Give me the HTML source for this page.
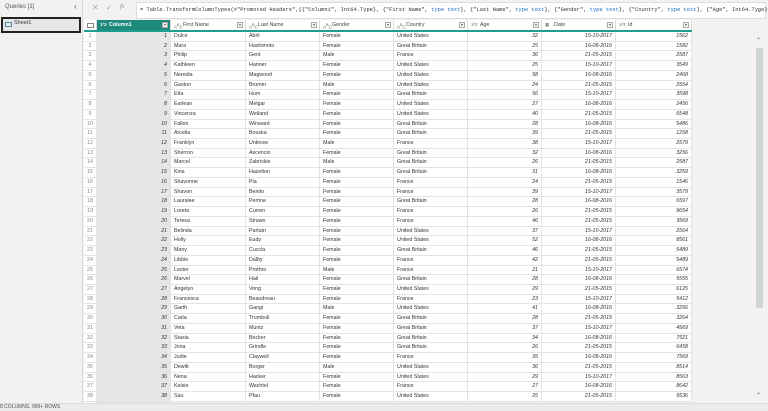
<!DOCTYPE html>
<html><head><meta charset="utf-8"><style>
*{margin:0;padding:0;box-sizing:border-box}
body{width:768px;height:411px;overflow:hidden;background:#f3f2f1;font-family:"Liberation Sans",sans-serif;position:relative;color:#333}
.a{position:absolute;white-space:nowrap}
.c{position:absolute;height:9.73px;font-size:5.3px;line-height:9.2px;padding:0 3px;border-bottom:1px solid #e4e4e4;border-right:1px solid #e4e4e4;background:#fff;overflow:hidden;white-space:nowrap}
.r{text-align:right;font-style:italic}
.h{position:absolute;top:20px;height:11px;font-size:5.3px;line-height:10px;background:#fff;border-right:1px solid #ddd;padding-left:12px;color:#444}
.h i{position:absolute;left:3px;top:0;font-style:normal;font-size:4.5px;color:#666}
.h b{position:absolute;right:2px;top:2px;width:6px;height:6px;border:1px solid #aaa;background:#f6f6f6;font-size:4px;line-height:4px;text-align:center;font-weight:normal;color:#555}
</style></head><body>
<div class="a" style="left:5px;top:4px;font-size:6px;color:#555">Queries [1]</div>
<div class="a" style="left:74px;top:2px;font-size:8px;color:#555">‹</div>
<div class="a" style="left:1px;top:17px;width:80px;height:16px;border:2px solid #222;background:#e6e6e6"></div>
<div class="a" style="left:5px;top:22px;width:7px;height:5px;border:1px solid #5a8aa0"></div>
<div class="a" style="left:14px;top:20px;font-size:5.5px;color:#333">Sheet1</div>
<div class="a" style="left:82px;top:0;width:1px;height:403px;background:#d8d8d8"></div>
<div class="a" style="left:92px;top:3px;font-size:8px;color:#aaa">✕</div>
<div class="a" style="left:106px;top:3px;font-size:8px;color:#aaa">✓</div>
<div class="a" style="left:120px;top:4px;font-size:6px;font-style:italic;color:#888;font-family:'Liberation Serif',serif">fx</div>
<div class="a" style="left:136px;top:2px;width:630px;height:17px;background:#fff;border:1px solid #ddd"></div>
<div class="a" style="left:140px;top:7px;font-size:5.4px;font-family:'Liberation Mono',monospace;color:#333">= Table.TransformColumnTypes(#"Promoted Headers",{{"Column1", Int64.Type}, {"First Name", <span style="color:#1a6ac4">type text</span>}, {"Last Name", <span style="color:#1a6ac4">type text</span>}, {"Gender", <span style="color:#1a6ac4">type text</span>}, {"Country", <span style="color:#1a6ac4">type text</span>}, {"Age", Int64.Type},</div>
<div class="a" style="left:757px;top:7px;font-size:6px;color:#555">⌄</div>
<div class="a" style="left:84px;top:20px;width:13px;height:11px;background:#fff;border-right:1px solid #ddd"></div>
<div class="a" style="left:87px;top:23px;width:7px;height:5px;border:1px solid #888"></div>
<div id="g"></div>
<div class="a" style="left:84px;top:30px;width:608px;height:2px;background:#1f9e8e"></div>
<div class="a" style="left:756px;top:48px;width:7px;height:260px;background:#cfd4d6"></div>
<div class="a" style="left:756px;top:37px;font-size:6px;color:#555">⌃</div>
<div class="a" style="left:756px;top:389px;font-size:6px;color:#555">⌄</div>
<div class="a" style="left:0;top:403px;width:768px;height:8px;background:#ecebea;border-top:1px solid #ddd"></div>
<div class="a" style="left:0;top:404px;font-size:5px;color:#555">8 COLUMNS, 999+ ROWS</div>
<script>
var d=`Dulce Abril Female US 32 15-10-2017 1562
Mara Hashimoto Female GB 25 16-08-2016 1582
Philip Gent Male France 36 21-05-2015 2587
Kathleen Hanner Female US 25 15-10-2017 3549
Nereida Magwood Female US 58 16-08-2016 2468
Gaston Brumm Male US 24 21-05-2015 2554
Etta Hurn Female GB 56 15-10-2017 3598
Earlean Melgar Female US 27 16-08-2016 2456
Vincenza Weiland Female US 40 21-05-2015 6548
Fallon Winward Female GB 28 16-08-2016 5486
Arcelia Bouska Female GB 39 21-05-2015 1258
Franklyn Unknow Male France 38 15-10-2017 2579
Sherron Ascencio Female GB 32 16-08-2016 3256
Marcel Zabriskie Male GB 26 21-05-2015 2587
Kina Hazelton Female GB 31 16-08-2016 3259
Shavonne Pia Female France 24 21-05-2015 1546
Shavon Benito Female France 39 15-10-2017 3579
Lauralee Perrine Female GB 28 16-08-2016 6597
Loreta Curren Female France 26 21-05-2015 9654
Teresa Strawn Female France 46 21-05-2015 3569
Belinda Partain Female US 37 15-10-2017 2564
Holly Eudy Female US 52 16-08-2016 8561
Many Cuccia Female GB 46 21-05-2015 5489
Libbie Dalby Female France 42 21-05-2015 5489
Lester Prothro Male France 21 15-10-2017 6574
Marvel Hail Female GB 28 16-08-2016 5555
Angelyn Vong Female US 29 21-05-2015 6125
Francesca Beaudreau Female France 23 15-10-2017 5412
Garth Gangi Male US 41 16-08-2016 3256
Carla Trumbull Female GB 28 21-05-2015 3264
Veta Muntz Female GB 37 15-10-2017 4569
Stasia Becker Female GB 34 16-08-2016 7521
Jona Grindle Female GB 26 21-05-2015 6458
Judie Claywell Female France 35 16-08-2016 7569
Dewitt Borger Male US 36 21-05-2015 8514
Nena Hacker Female US 29 15-10-2017 8563
Kelsie Wachtel Female France 27 16-08-2016 8642
Sau Pfau Female US 25 21-05-2015 9536`.split("\n");
var X=[84,97,171,246,320,394,468,542,616,692];
var H=[["1²3","Column1"],["A<sup>B</sup>C","First Name"],["A<sup>B</sup>C","Last Name"],["A<sup>B</sup>C","Gender"],["A<sup>B</sup>C","Country"],["1²3","Age"],["▦","Date"],["1²3","Id"]];
var s="";
H.forEach(function(h,i){var st="left:"+X[i+1]+"px;width:"+(X[i+2]-X[i+1])+"px;";if(i==0)st+="background:#1d8a7c;color:#fff;font-weight:bold;";
s+='<div class="h" style="'+st+'"><i'+(i==0?' style="color:#fff"':'')+'>'+h[0]+'</i>'+h[1]+'<b>▾</b></div>';});
d.forEach(function(l,k){var p=l.split(" ");p[3]=p[3]=="US"?"United States":p[3]=="GB"?"Great Britain":p[3];
var y=32+k*9.73;
s+='<div class="c" style="left:84px;top:'+y+'px;width:13px;color:#888;text-align:center;padding:0">'+(k+1)+'</div>';
s+='<div class="c r" style="left:97px;top:'+y+'px;width:74px;background:#e6e6e6">'+(k+1)+'</div>';
var v=[p[0],p[1],p[2],p[3],p[4],p[5],p[6]];
for(var j=0;j<7;j++){var x=X[j+2];s+='<div class="c'+(j>=4?' r':'')+'" style="left:'+x+'px;top:'+y+'px;width:'+(X[j+3]-x)+'px">'+v[j]+'</div>';}
});
s+='<div class="c" style="left:84px;top:'+(32+38*9.73)+'px;width:13px;height:3px"></div><div class="c" style="left:97px;top:'+(32+38*9.73)+'px;width:74px;height:3px;background:#e6e6e6"></div>';
document.getElementById("g").innerHTML=s;
</script>
</body></html>
